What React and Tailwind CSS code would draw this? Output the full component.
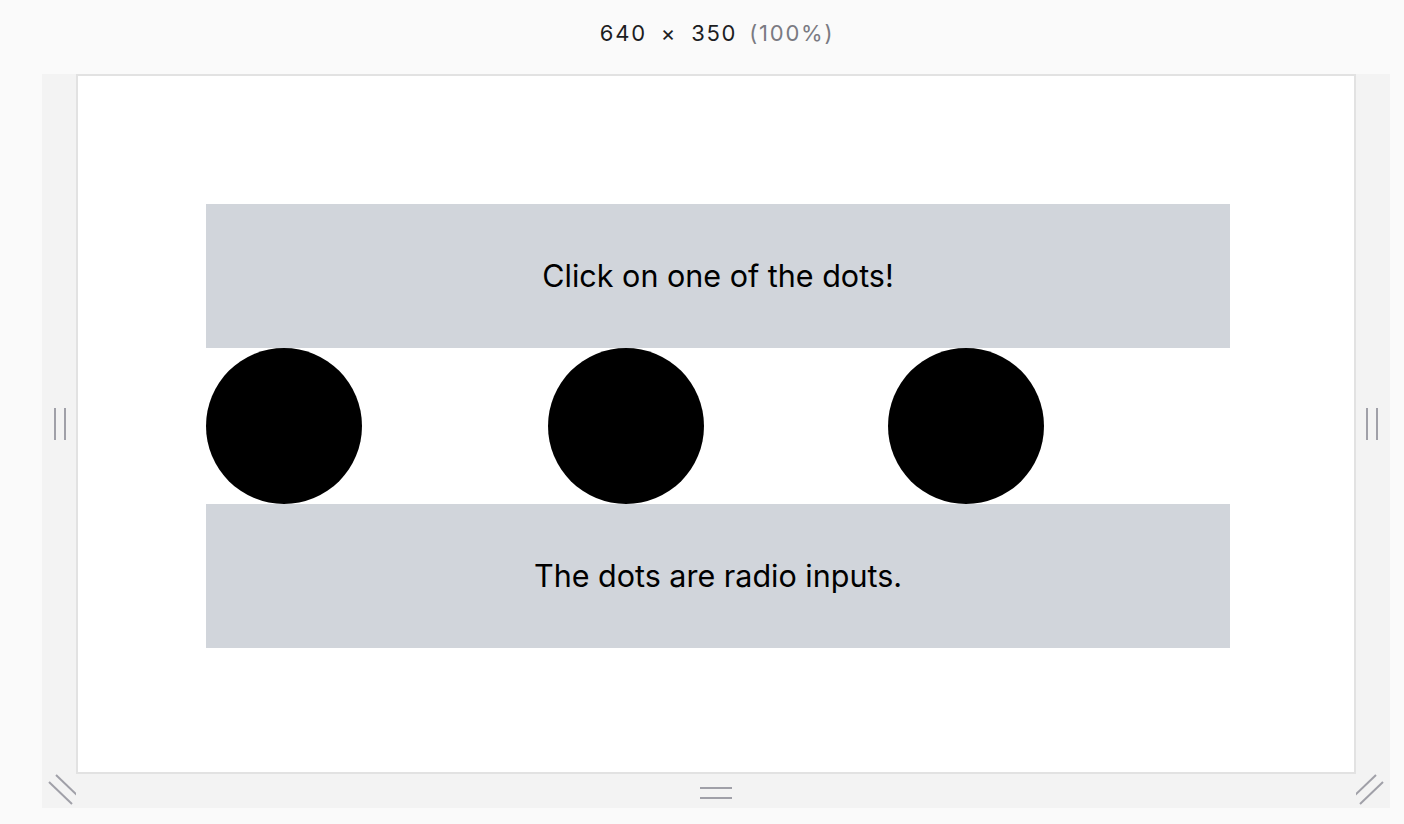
const sans = { fontFamily: 'Inter, "Noto Sans", sans-serif' };

function Dot({ className = '' }) {
  return <div className={`h-[156px] w-[156px] shrink-0 rounded-full bg-black ${className}`} />;
}

function Grip({ vertical }) {
  // two short bars, like the resize handles of the preview frame
  return vertical ? (
    <div className="flex h-[32px] gap-[8px]">
      <div className="h-full w-[2px] bg-[#a0a0a8]" />
      <div className="h-full w-[2px] bg-[#a0a0a8]" />
    </div>
  ) : (
    <div className="flex w-[32px] flex-col gap-[8px]">
      <div className="h-[2px] w-full bg-[#a0a0a8]" />
      <div className="h-[2px] w-full bg-[#a0a0a8]" />
    </div>
  );
}

function Corner({ flip }) {
  return (
    <svg width="34" height="34" viewBox="0 0 34 34" className={flip ? '-scale-x-100' : ''}>
      <line x1="14" y1="1" x2="37" y2="23" stroke="#a0a0a8" strokeWidth="2" />
      <line x1="7" y1="8" x2="30" y2="30" stroke="#a0a0a8" strokeWidth="2" />
    </svg>
  );
}

export default function App() {
  return (
    <div className="flex h-[824px] w-[1404px] flex-col bg-[#fafafa]" style={sans}>
      <div className="flex h-[74px] items-center justify-center pb-[8px] pl-[30px] text-[22px] tracking-[0.08em] text-[#1d1d1f]">
        <span>640</span>
        <span className="mx-[14px]">×</span>
        <span>350</span>
        <span className="ml-[12px] text-[#7a7a82]">(100%)</span>
      </div>

      <div className="ml-[42px] flex w-[1348px] flex-col bg-[#f3f3f3]">
        <div className="flex h-[700px]">
          <div className="flex w-[34px] items-center justify-center pl-[2px]">
            <Grip vertical />
          </div>
          <div className="h-[700px] w-[1280px] border-2 border-[#e2e2e2] bg-white pl-[128px] pt-[128px]">
            <div className="w-[1024px]">
              <div className="flex h-[144px] items-center justify-center bg-[#d1d5db] text-[30.5px] text-black">
                Click on one of the dots!
              </div>
              <div className="flex h-[156px]">
                <Dot />
                <Dot className="ml-[186px]" />
                <Dot className="ml-[184px]" />
              </div>
              <div className="flex h-[144px] items-center justify-center bg-[#d1d5db] text-[30.5px] text-black">
                The dots are radio inputs.
              </div>
            </div>
          </div>
          <div className="flex w-[34px] items-center justify-center pr-[2px]">
            <Grip vertical />
          </div>
        </div>
        <div className="flex h-[34px] items-start justify-between">
          <Corner />
          <div className="pt-[13px]">
            <Grip />
          </div>
          <Corner flip />
        </div>
      </div>
    </div>
  );
}
